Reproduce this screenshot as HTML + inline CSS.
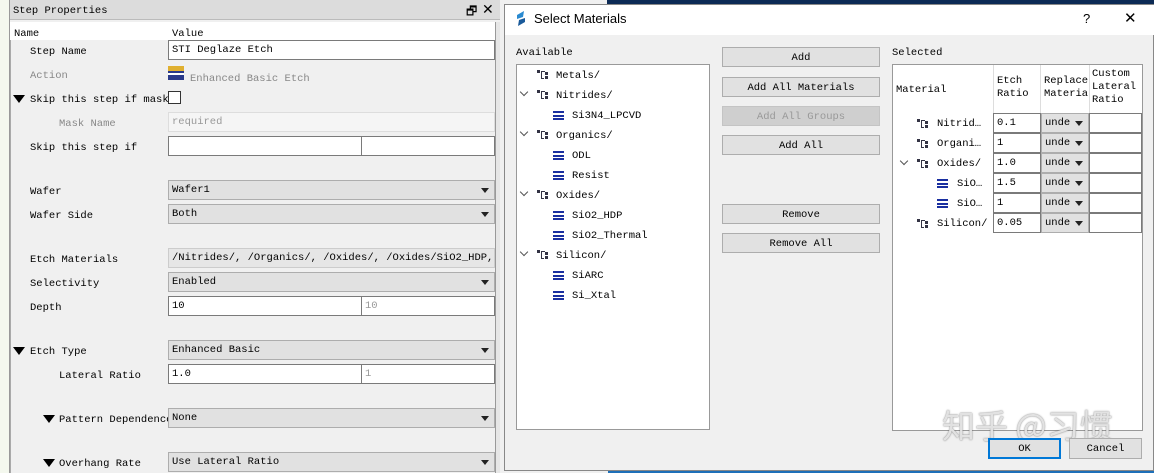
<!DOCTYPE html>
<html><head><meta charset="utf-8"><style>
*{box-sizing:border-box;margin:0;padding:0}
body{width:1154px;height:473px;overflow:hidden;background:#f0f0f0;position:relative;font-family:"Liberation Mono","Noto Sans CJK SC",monospace;font-size:10.5px;color:#000}
.a{position:absolute;white-space:nowrap}
.lbl{position:absolute;white-space:nowrap;line-height:14px;padding-top:2px}
.inp{position:absolute;background:#fff;border:1px solid #7a7a7a;height:20px;line-height:19px;padding-left:3px}
.cmb{position:absolute;background:#e1e1e1;border:1px solid #adadad;height:20px;line-height:19px;padding-left:3px}
.cmb:after{content:"";position:absolute;right:5px;top:7px;border-left:4px solid transparent;border-right:4px solid transparent;border-top:5px solid #222}
.tri{position:absolute;width:0;height:0;border-left:6px solid transparent;border-right:6px solid transparent;border-top:8px solid #000}
.btn{position:absolute;left:722px;width:158px;height:20px;background:#e1e1e1;border:1px solid #adadad;text-align:center;line-height:20px}
.grp{position:absolute;width:12px;height:10px}
.grp i{position:absolute;background:#334;display:block}
.itm{position:absolute;width:11px;height:9px;border-top:2px solid #1a2fa0;border-bottom:2px solid #1a2fa0}
.itm:after{content:"";position:absolute;left:0;right:0;top:1.5px;height:2px;background:#1a2fa0}
.chev{position:absolute;width:6px;height:6px;border-right:1.5px solid #555;border-bottom:1.5px solid #555;transform:rotate(45deg)}
</style></head><body>
<div class="a" style="left:0;top:0;width:10px;height:473px;background:#f4f8ee;border-right:1px solid #999"></div>
<div class="a" style="left:10px;top:0;width:490px;height:20px;background:#dcdcdc;border-bottom:1px solid #bbb"></div>
<div class="lbl" style="left:13px;top:2px">Step Properties</div>
<div class="a" style="left:466px;top:2px;font-family:'Liberation Sans',sans-serif;font-size:12px">🗗</div>
<div class="a" style="left:482px;top:1px;font-family:'Liberation Sans',sans-serif;font-size:14px">✕</div>
<div class="a" style="left:10px;top:22px;width:485px;height:451px;background:#f0f0f0;border-left:1px solid #aaa"></div>
<div class="a" style="left:10px;top:22px;width:485px;height:18px;background:#fff"></div>
<div class="lbl" style="left:14px;top:25px">Name</div>
<div class="lbl" style="left:172px;top:25px">Value</div>
<div class="a" style="left:495px;top:22px;width:5px;height:451px;background:#e6e6e6;border-left:1px solid #999"></div>

<div class="lbl" style="left:30px;top:43px">Step Name</div>
<div class="inp" style="left:168px;top:40px;width:327px">STI Deglaze Etch</div>
<div class="lbl" style="left:30px;top:67px;color:#888">Action</div>
<div class="a" style="left:168px;top:66px;width:16px;height:14px;background:#2a3a8a;border-top:5px solid #e0b030"></div>
<div class="a" style="left:168px;top:73px;width:16px;height:2px;background:#fff"></div>
<div class="lbl" style="left:190px;top:70px;color:#888">Enhanced Basic Etch</div>
<div class="tri" style="left:13px;top:95px"></div>
<div class="lbl" style="left:30px;top:91px">Skip this step if mask</div>
<div class="a" style="left:168px;top:91px;width:13px;height:13px;background:#fff;border:1px solid #333"></div>
<div class="lbl" style="left:59px;top:115px;color:#888">Mask Name</div>
<div class="a" style="left:168px;top:112px;width:327px;height:20px;background:#f5f5f5;border:1px solid #ddd;color:#999;line-height:19px;padding-left:3px">required</div>
<div class="lbl" style="left:30px;top:139px">Skip this step if</div>
<div class="inp" style="left:168px;top:136px;width:194px"></div>
<div class="inp" style="left:361px;top:136px;width:134px"></div>
<div class="lbl" style="left:30px;top:183px">Wafer</div>
<div class="cmb" style="left:168px;top:180px;width:327px">Wafer1</div>
<div class="lbl" style="left:30px;top:207px">Wafer Side</div>
<div class="cmb" style="left:168px;top:204px;width:327px">Both</div>
<div class="lbl" style="left:30px;top:251px">Etch Materials</div>
<div class="a" style="left:168px;top:248px;width:327px;height:20px;background:#e6e6e6;border:1px solid #ccc;line-height:19px;padding-left:3px;overflow:hidden">/Nitrides/, /Organics/, /Oxides/, /Oxides/SiO2_HDP, /O</div>
<div class="lbl" style="left:30px;top:275px">Selectivity</div>
<div class="cmb" style="left:168px;top:272px;width:327px">Enabled</div>
<div class="lbl" style="left:30px;top:299px">Depth</div>
<div class="inp" style="left:168px;top:296px;width:194px">10</div>
<div class="inp" style="left:361px;top:296px;width:134px;color:#999">10</div>
<div class="tri" style="left:13px;top:347px"></div>
<div class="lbl" style="left:30px;top:343px">Etch Type</div>
<div class="cmb" style="left:168px;top:340px;width:327px">Enhanced Basic</div>
<div class="lbl" style="left:59px;top:367px">Lateral Ratio</div>
<div class="inp" style="left:168px;top:364px;width:194px">1.0</div>
<div class="inp" style="left:361px;top:364px;width:134px;color:#999">1</div>
<div class="tri" style="left:43px;top:415px"></div>
<div class="lbl" style="left:59px;top:411px;width:109px;overflow:hidden">Pattern Dependence</div>
<div class="cmb" style="left:168px;top:408px;width:327px">None</div>
<div class="tri" style="left:43px;top:459px"></div>
<div class="lbl" style="left:59px;top:455px">Overhang Rate</div>
<div class="cmb" style="left:168px;top:452px;width:327px">Use Lateral Ratio</div>

<div class="a" style="left:607px;top:0;width:547px;height:5px;background:#0c2a55"></div>
<div class="a" style="left:608px;top:469px;width:546px;height:4px;background:#1e6fb8"></div>
<div class="a" style="left:504px;top:4px;width:650px;height:467px;background:#f0f0f0;border:1px solid #888"></div>
<div class="a" style="left:505px;top:5px;width:649px;height:30px;background:#fff"></div>
<svg class="a" style="left:515px;top:10px" width="12" height="17" viewBox="0 0 12 17"><path d="M9 1 L2 5 L2 9 L8 7 Z" fill="#2a8ad0"/><path d="M3 16 L10 12 L10 8 L4 10 Z" fill="#1a5a9a"/></svg>
<div class="a" style="left:534px;top:11px;font-family:'Liberation Sans',sans-serif;font-size:13px">Select Materials</div>
<div class="a" style="left:1083px;top:11px;font-family:'Liberation Sans',sans-serif;font-size:13px">?</div>
<div class="a" style="left:1124px;top:9px;font-family:'Liberation Sans',sans-serif;font-size:15px">✕</div>

<div class="lbl" style="left:516px;top:44px">Available</div>
<div class="a" style="left:516px;top:64px;width:194px;height:366px;background:#fff;border:1px solid #999"></div>

<div class="grp" style="left:537px;top:70px"><i style="left:0;top:0;width:3px;height:3px"></i><i style="left:4px;top:1px;width:1px;height:8px"></i><i style="left:4px;top:1px;width:4px;height:1px"></i><i style="left:4px;top:8px;width:3px;height:1px"></i><i style="left:8px;top:2px;width:3px;height:3px"></i><i style="left:8px;top:6px;width:3px;height:3px"></i></div>
<div class="lbl" style="left:556px;top:67px">Metals/</div>
<div class="chev" style="left:521px;top:89px"></div>
<div class="grp" style="left:537px;top:90px"><i style="left:0;top:0;width:3px;height:3px"></i><i style="left:4px;top:1px;width:1px;height:8px"></i><i style="left:4px;top:1px;width:4px;height:1px"></i><i style="left:4px;top:8px;width:3px;height:1px"></i><i style="left:8px;top:2px;width:3px;height:3px"></i><i style="left:8px;top:6px;width:3px;height:3px"></i></div>
<div class="lbl" style="left:556px;top:87px">Nitrides/</div>
<div class="itm" style="left:553px;top:111px"></div><div class="lbl" style="left:572px;top:107px">Si3N4_LPCVD</div>
<div class="chev" style="left:521px;top:129px"></div>
<div class="grp" style="left:537px;top:130px"><i style="left:0;top:0;width:3px;height:3px"></i><i style="left:4px;top:1px;width:1px;height:8px"></i><i style="left:4px;top:1px;width:4px;height:1px"></i><i style="left:4px;top:8px;width:3px;height:1px"></i><i style="left:8px;top:2px;width:3px;height:3px"></i><i style="left:8px;top:6px;width:3px;height:3px"></i></div>
<div class="lbl" style="left:556px;top:127px">Organics/</div>
<div class="itm" style="left:553px;top:151px"></div><div class="lbl" style="left:572px;top:147px">ODL</div>
<div class="itm" style="left:553px;top:171px"></div><div class="lbl" style="left:572px;top:167px">Resist</div>
<div class="chev" style="left:521px;top:189px"></div>
<div class="grp" style="left:537px;top:190px"><i style="left:0;top:0;width:3px;height:3px"></i><i style="left:4px;top:1px;width:1px;height:8px"></i><i style="left:4px;top:1px;width:4px;height:1px"></i><i style="left:4px;top:8px;width:3px;height:1px"></i><i style="left:8px;top:2px;width:3px;height:3px"></i><i style="left:8px;top:6px;width:3px;height:3px"></i></div>
<div class="lbl" style="left:556px;top:187px">Oxides/</div>
<div class="itm" style="left:553px;top:211px"></div><div class="lbl" style="left:572px;top:207px">SiO2_HDP</div>
<div class="itm" style="left:553px;top:231px"></div><div class="lbl" style="left:572px;top:227px">SiO2_Thermal</div>
<div class="chev" style="left:521px;top:249px"></div>
<div class="grp" style="left:537px;top:250px"><i style="left:0;top:0;width:3px;height:3px"></i><i style="left:4px;top:1px;width:1px;height:8px"></i><i style="left:4px;top:1px;width:4px;height:1px"></i><i style="left:4px;top:8px;width:3px;height:1px"></i><i style="left:8px;top:2px;width:3px;height:3px"></i><i style="left:8px;top:6px;width:3px;height:3px"></i></div>
<div class="lbl" style="left:556px;top:247px">Silicon/</div>
<div class="itm" style="left:553px;top:271px"></div><div class="lbl" style="left:572px;top:267px">SiARC</div>
<div class="itm" style="left:553px;top:291px"></div><div class="lbl" style="left:572px;top:287px">Si_Xtal</div>

<div class="btn" style="top:47px">Add</div>
<div class="btn" style="top:77px">Add All Materials</div>
<div class="btn" style="top:106px;background:#cfcfcf;border-color:#c4c4c4;color:#999">Add All Groups</div>
<div class="btn" style="top:135px">Add All</div>
<div class="btn" style="top:204px">Remove</div>
<div class="btn" style="top:233px">Remove All</div>

<div class="lbl" style="left:892px;top:44px">Selected</div>
<div class="a" style="left:892px;top:64px;width:251px;height:367px;background:#fff;border:1px solid #999"></div>
<div class="a" style="left:993px;top:65px;width:1px;height:48px;background:#ddd"></div>
<div class="a" style="left:1040px;top:65px;width:1px;height:48px;background:#ddd"></div>
<div class="a" style="left:1089px;top:65px;width:1px;height:48px;background:#ddd"></div>
<div class="lbl" style="left:896px;top:81px">Material</div>
<div class="lbl" style="left:997px;top:73px;line-height:13px">Etch<br>Ratio</div>
<div class="lbl" style="left:1044px;top:73px;line-height:13px;width:45px;overflow:hidden">Replace<br>Material</div>
<div class="lbl" style="left:1092px;top:66px;line-height:13px">Custom<br>Lateral<br>Ratio</div>

<div class="grp" style="left:917px;top:119px"><i style="left:0;top:0;width:3px;height:3px"></i><i style="left:4px;top:1px;width:1px;height:8px"></i><i style="left:4px;top:1px;width:4px;height:1px"></i><i style="left:4px;top:8px;width:3px;height:1px"></i><i style="left:8px;top:2px;width:3px;height:3px"></i><i style="left:8px;top:6px;width:3px;height:3px"></i></div>
<div class="lbl" style="left:937px;top:115px">Nitrid…</div>
<div class="grp" style="left:917px;top:139px"><i style="left:0;top:0;width:3px;height:3px"></i><i style="left:4px;top:1px;width:1px;height:8px"></i><i style="left:4px;top:1px;width:4px;height:1px"></i><i style="left:4px;top:8px;width:3px;height:1px"></i><i style="left:8px;top:2px;width:3px;height:3px"></i><i style="left:8px;top:6px;width:3px;height:3px"></i></div>
<div class="lbl" style="left:937px;top:135px">Organi…</div>
<div class="chev" style="left:901px;top:158px"></div>
<div class="grp" style="left:917px;top:159px"><i style="left:0;top:0;width:3px;height:3px"></i><i style="left:4px;top:1px;width:1px;height:8px"></i><i style="left:4px;top:1px;width:4px;height:1px"></i><i style="left:4px;top:8px;width:3px;height:1px"></i><i style="left:8px;top:2px;width:3px;height:3px"></i><i style="left:8px;top:6px;width:3px;height:3px"></i></div>
<div class="lbl" style="left:937px;top:155px">Oxides/</div>
<div class="itm" style="left:937px;top:179px"></div><div class="lbl" style="left:957px;top:175px">SiO…</div>
<div class="itm" style="left:937px;top:199px"></div><div class="lbl" style="left:957px;top:195px">SiO…</div>
<div class="grp" style="left:917px;top:219px"><i style="left:0;top:0;width:3px;height:3px"></i><i style="left:4px;top:1px;width:1px;height:8px"></i><i style="left:4px;top:1px;width:4px;height:1px"></i><i style="left:4px;top:8px;width:3px;height:1px"></i><i style="left:8px;top:2px;width:3px;height:3px"></i><i style="left:8px;top:6px;width:3px;height:3px"></i></div>
<div class="lbl" style="left:937px;top:215px">Silicon/</div>

<div class="inp" style="left:993px;top:113px;width:48px">0.1</div>
<div class="inp" style="left:993px;top:133px;width:48px">1</div>
<div class="inp" style="left:993px;top:153px;width:48px">1.0</div>
<div class="inp" style="left:993px;top:173px;width:48px">1.5</div>
<div class="inp" style="left:993px;top:193px;width:48px">1</div>
<div class="inp" style="left:993px;top:213px;width:48px">0.05</div>
<div class="cmb" style="left:1041px;top:113px;width:48px">unde</div>
<div class="cmb" style="left:1041px;top:133px;width:48px">unde</div>
<div class="cmb" style="left:1041px;top:153px;width:48px">unde</div>
<div class="cmb" style="left:1041px;top:173px;width:48px">unde</div>
<div class="cmb" style="left:1041px;top:193px;width:48px">unde</div>
<div class="cmb" style="left:1041px;top:213px;width:48px">unde</div>
<div class="inp" style="left:1089px;top:113px;width:53px"></div>
<div class="inp" style="left:1089px;top:133px;width:53px"></div>
<div class="inp" style="left:1089px;top:153px;width:53px"></div>
<div class="inp" style="left:1089px;top:173px;width:53px"></div>
<div class="inp" style="left:1089px;top:193px;width:53px"></div>
<div class="inp" style="left:1089px;top:213px;width:53px"></div>

<div class="a" style="left:942px;top:402px;font-family:'Noto Sans CJK SC',sans-serif;font-size:33px;color:rgba(235,235,235,0.9);text-shadow:0 0 1px #888,0 0 2px rgba(0,0,0,0.3);line-height:44px">知乎 @习惯</div>

<div class="a" style="left:988px;top:438px;width:73px;height:21px;background:#e1e1e1;border:2px solid #0078d7;text-align:center;line-height:18px">OK</div>
<div class="a" style="left:1069px;top:438px;width:73px;height:21px;background:#e1e1e1;border:1px solid #adadad;text-align:center;line-height:20px">Cancel</div>
</body></html>
